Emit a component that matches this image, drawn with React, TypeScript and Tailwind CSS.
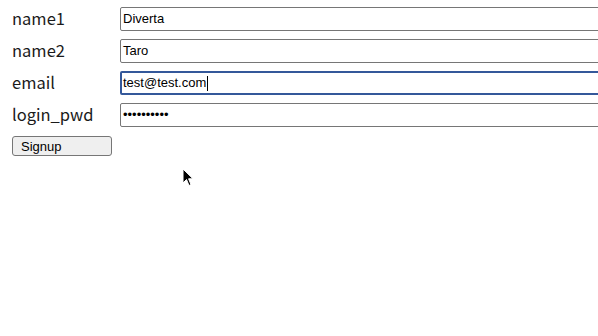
import React from 'react';

const fields = [
  { label: 'name1', value: 'Diverta', type: 'text' },
  { label: 'name2', value: 'Taro', type: 'text' },
  { label: 'email', value: 'test@test.com', type: 'email', focused: true },
  { label: 'login_pwd', value: '••••••••••', type: 'password' },
];

const App: React.FC = () => {
  return (
    <div className="relative w-[598px] h-[336px] overflow-hidden bg-white">
      <div className="flex flex-col gap-2 pt-[7px] pl-3">
        {fields.map((f) => (
          <div key={f.label} className="flex items-center h-6">
            <label className="w-[108px] shrink-0 pb-[3px] text-[16.5px] leading-6 text-[#1a1a1a] [font-family:'Noto_Sans_CJK_JP',sans-serif]">
              {f.label}
            </label>
            <div
              className={
                f.focused
                  ? 'flex items-center h-6 w-[520px] shrink-0 border-2 border-[#34589a] rounded-[2px] pl-[1px]'
                  : 'flex items-center h-6 w-[520px] shrink-0 border border-[#767676] rounded-[2px] pl-[2px]'
              }
            >
              <span className="text-[13px] text-black [font-family:'Liberation_Sans',sans-serif]">
                {f.value}
              </span>
              {f.focused && <span className="w-px h-[15px] bg-black ml-px" />}
            </div>
          </div>
        ))}
        <button className="block mt-[1px] w-[100px] h-5 text-left pl-2 bg-[#efefef] border border-[#767676] rounded-[3px] text-[13px] leading-none text-black [font-family:'Liberation_Sans',sans-serif]">
          Signup
        </button>
      </div>
      <svg className="absolute left-[182px] top-[168px]" width="12" height="19" viewBox="0 0 12 19">
        <path d="M1 1 L1 15 L4.5 11.5 L7 17.5 L9 16.6 L6.6 10.8 L11 10.8 Z" fill="#000" stroke="#fff" strokeWidth="1" />
      </svg>
    </div>
  );
};

export default App;
